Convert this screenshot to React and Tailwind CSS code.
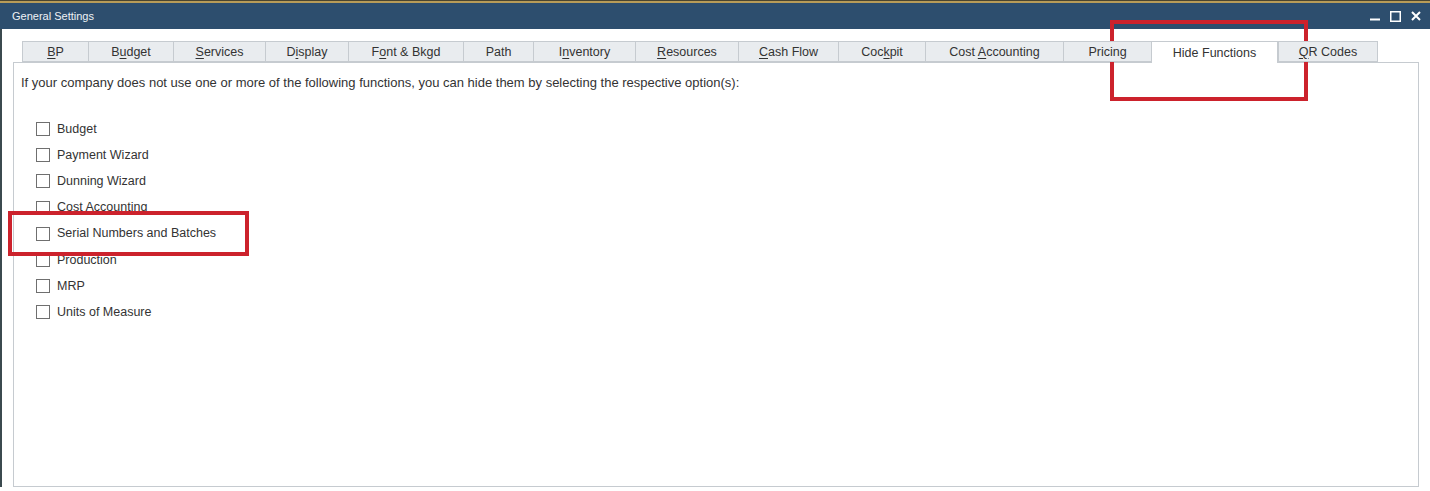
import React from "react";

const tabs = [
  { label: "BP", u: 0, w: 66 },
  { label: "Budget", u: 1, w: 85 },
  { label: "Services", u: 0, w: 92 },
  { label: "Display", u: 1, w: 83 },
  { label: "Font & Bkgd", u: 1, w: 115 },
  { label: "Path", u: -1, w: 70 },
  { label: "Inventory", u: 1, w: 102 },
  { label: "Resources", u: 0, w: 103 },
  { label: "Cash Flow", u: 0, w: 100 },
  { label: "Cockpit", u: 3, w: 87 },
  { label: "Cost Accounting", u: 5, w: 138 },
  { label: "Pricing", u: -1, w: 88 },
  { label: "Hide Functions", u: -1, w: 127, active: true },
  { label: "QR Codes", u: 0, w: 100 },
];

const items = [
  "Budget",
  "Payment Wizard",
  "Dunning Wizard",
  "Cost Accounting",
  "Serial Numbers and Batches",
  "Production",
  "MRP",
  "Units of Measure",
];

function TabLabel({ label, u }) {
  if (u < 0) return <span>{label}</span>;
  return (
    <span>
      {label.slice(0, u)}
      <span className="underline underline-offset-2">{label[u]}</span>
      {label.slice(u + 1)}
    </span>
  );
}

export default function App() {
  return (
    <div
      className="relative w-[1430px] h-[491px] overflow-hidden bg-white text-[#333333]"
      style={{ fontFamily: '"Liberation Sans", Arial, sans-serif' }}
    >
      {/* top gold edge */}
      <div className="h-[1px] bg-[#4a4530]" />
      <div className="h-[2px] bg-[#b89c58]" />
      {/* title bar */}
      <div className="flex h-[26px] items-center justify-between bg-[#2d4e6e] pl-[12px] pr-[9px]">
        <span className="text-[11px] text-[#eef2f6]">General Settings</span>
        <div className="flex items-center gap-[10px] text-white">
          <svg width="10" height="10" viewBox="0 0 10 10">
            <rect x="0" y="7.5" width="10" height="2" fill="#ffffff" />
          </svg>
          <svg width="11" height="11" viewBox="0 0 11 11">
            <rect x="0.75" y="0.75" width="9.5" height="9.5" fill="none" stroke="#ffffff" strokeWidth="1.5" />
          </svg>
          <svg width="10" height="10" viewBox="0 0 10 10">
            <path d="M1 1 L9 9 M9 1 L1 9" stroke="#ffffff" strokeWidth="2" />
          </svg>
        </div>
      </div>

      {/* body */}
      <div className="flex h-[458px]">
        <div className="w-[2px] h-[458px] bg-[#3b4a4f]" />
        <div className="flex flex-col pl-[11px] pt-[12px]">
          {/* tab strip */}
          <div className="relative z-10 flex h-[21px] pl-[9px]">
            {tabs.map((t) => (
              <div
                key={t.label}
                style={{ width: t.w }}
                className={
                  t.active
                    ? "flex h-[22px] shrink-0 items-center justify-center border-x border-t border-[#c6cbd0] bg-white pt-[1px] text-[12.5px] text-[#333333]"
                    : "flex h-[21px] shrink-0 items-center justify-center border-l border-t border-b border-[#c6cbd0] bg-[#e9ecef] pt-[1px] text-[12.5px] text-[#333333] last:border-r"
                }
              >
                <TabLabel label={t.label} u={t.u} />
              </div>
            ))}
          </div>
          {/* panel */}
          <div className="flex h-[425px] w-[1406px] flex-col border border-[#c6cbd0] bg-white pl-[7px] pt-[12px]">
            <p className="text-[13px] leading-[16px] text-[#333333]">
              If your company does not use one or more of the following functions, you can hide them by selecting the respective option(s):
            </p>
            <div className="mt-[25px] flex flex-col pl-[15px]">
              {items.map((it) => (
                <div key={it} className="flex h-[26.2px] items-center gap-[7px]">
                  <span className="block h-[14px] w-[14px] border border-[#6f6f6f] bg-white" />
                  <span className="text-[12.5px] text-[#333333]">{it}</span>
                </div>
              ))}
            </div>
          </div>
        </div>
      </div>

      {/* red highlight boxes */}
      <div className="pointer-events-none absolute left-[1110px] top-[20px] h-[81px] w-[198px] border-[4px] border-[#cc222c]" />
      <div className="pointer-events-none absolute left-[8px] top-[211px] h-[45px] w-[241px] border-[4px] border-[#cc222c]" />
    </div>
  );
}
